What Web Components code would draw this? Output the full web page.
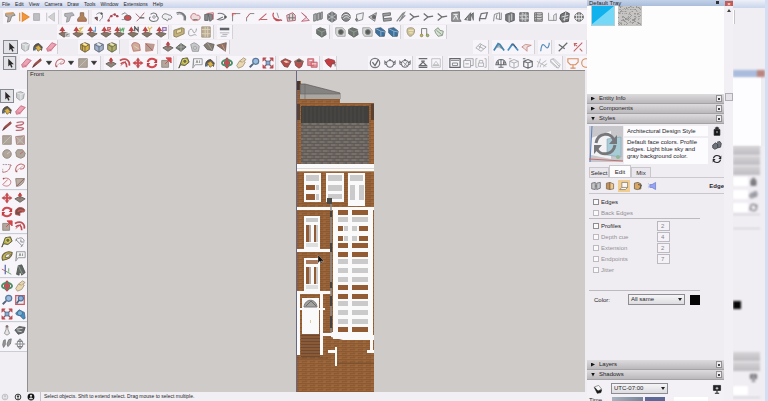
<!DOCTYPE html>
<html lang="en">
<head>
<meta charset="utf-8">
<title>Modeling workspace</title>
<style>
  html, body { margin: 0; height: 100%; overflow: hidden; }
  body { font: 6px/8px "Liberation Sans", "Open Sans", sans-serif; color: #26262a; background: #f0edf2; }
</style>
</head>
<body>
<model-workspace></model-workspace>
<script>
const ICONS = {
  pointer: '<path d="M5 2v9l2-2 1.5 3.5 1.5-.7-1.5-3.3h3z" fill="#111" stroke="none"/>',
  solid: '<path d="M3 3l5-1 4 2-1 6-4 2-4-3z" fill="#c6cacb" stroke="#8b9092"/><path d="M3 3l5 2v7M8 5l4-1" stroke="#eee"/>',
  bucket: '<path d="M2 11c-1-5 2-8 6-8l4 4-1 4-4-4z" fill="#463c38" stroke="#333"/><path d="M4 7l4-2 3 4-4 3z" fill="#d5a82c" stroke="#76602b"/><path d="M2 7l2 2v3z" fill="#377da8" stroke="none"/>',
  eraser: '<path d="M2 9l6-7 5 2-6 7-4 1z" fill="#eb9bab" stroke="#bd5369"/><path d="M2 9l5 1 6-6M7 10v2" stroke="#d66f85"/>',
  pencil: '<path d="M2 12l2-4 7-6 1 2-7 6z" fill="#923831" stroke="#7d2b27"/><path d="M2 12l3-3" stroke="#222"/>',
  squiggle: '<path d="M3 3c12-3 9 3 3 3s-4 3 2 3 3 4-6 3" stroke="#b55661" stroke-width="1.5"/>',
  rect: '<path d="M2 2h10v10H2z" fill="#a59a8d" stroke="#887c71"/><path d="M2 12L12 2" stroke="#c5bcb1"/>',
  rrect: '<path d="M2 3l10-1v10H3z" fill="#a99e94" stroke="#a4625b"/><path d="M2 3l10 9M12 2L3 12" stroke="#c6bcb1"/>',
  circle: '<circle cx="7" cy="7" r="5" fill="#a69b8e" stroke="#817469"/><path d="M7 7l4-3" stroke="#d1c6bb"/>',
  poly: '<path d="M4 2h6l3 4-1 4-4 2-5-2-1-5z" fill="#a69b8e" stroke="#817469"/><path d="M7 7l4-3" stroke="#b5524d"/>',
  arc: '<path d="M2 12c6 0 9-4 9-9" stroke="#b2464f"/><path d="M2 12V8M2 3h9l2 2" stroke="#8f7777" stroke-dasharray="2 1"/>',
  pie: '<path d="M2 11C1 4 8 0 12 4c1 3-2 5-5 4" stroke="#bd5054" stroke-width="1.2"/><path d="M2 11l9-7" stroke="#c9a5a5"/><circle cx="3" cy="11" r="1" fill="#a44" stroke="none"/>',
  loop: '<path d="M3 3c5-2 10 2 8 6s-7 3-9 1M2 10l6-6" stroke="#bb555d"/><circle cx="3" cy="3" r="1" fill="#a33" stroke="none"/>',
  fan: '<path d="M2 3h10c0 6-5 9-9 9z" fill="#b1a397" stroke="#806c60"/><path d="M3 12l9-9" stroke="#744"/>',
  move: '<path d="M7 1l2 3H8v2h2V5l3 2-3 2V8H8v2h1l-2 3-2-3h1V8H4v1L1 7l3-2v1h2V4H5z" fill="#cc2f33" stroke="#9f2429" stroke-width=".5"/>',
  push: '<path d="M1 8l6-3 6 3-6 4z" fill="#81776c" stroke="#504841"/><path d="M7 8V2M5 4l2-3 2 3z" fill="#cc2b2e" stroke="#b82428"/>',
  rotate: '<path d="M2 6c1-5 8-5 10-1M12 8c-1 5-8 5-10 1" stroke="#c8343a" stroke-width="2.4"/><path d="M13 2v5H9zM1 12V7h4z" fill="#b6262c" stroke="none"/>',
  follow: '<path d="M2 10C0 4 5 1 9 2s5 4 1 5-3 1-3 4z" fill="#653832" stroke="#a63431"/><path d="M5 7c0-3 5-3 7 0" stroke="#ba443c" stroke-width="2"/>',
  scale: '<path d="M2 4h8v8H2z" fill="#a99d90" stroke="#817469"/><path d="M6 8l5-5M7 1h6v6z" fill="#cf2e33" stroke="#cf2e33"/>',
  offset: '<path d="M1 4c8-4 12 1 11 6M2 8c5-4 7-1 7 4" stroke="#b9383d" stroke-width="2"/><path d="M8 5l-6 5" stroke="#b9383d"/>',
  tape: '<path d="M2 10l3-8 6-1 2 5-5 4-5-1-2 4z" fill="#aaa236" stroke="#36351c"/><circle cx="8" cy="5" r="2.5" fill="#5d592e" stroke="#eee55a"/>',
  dim: '<path d="M2 4l8 8M4 2L2 6M11 9l-3 4M5 3c4-2 6 0 7 3M8 4v3h4" stroke="#6c6f73"/>',
  protractor: '<path d="M2 12C-1 5 7 0 13 3 13 9 8 11 2 12z" fill="#b8ac37" stroke="#554c2d" stroke-width="1.3"/><path d="M5 9c0-4 3-5 6-4-1 3-3 4-6 4z" fill="#eee" stroke="#594c29"/>',
  label: '<path d="M3 2h10v7H5l-3 4zM3 2v8" fill="#f6f6f6" stroke="#7d8186"/><path d="M6 7l1-3 1 3M10 4v3" stroke="#777"/>',
  axes: '<path d="M5 1v11" stroke="#5360a8" stroke-width="1.6"/><path d="M5 8l7 4M9 5v4" stroke="#438a4d"/><path d="M5 8L1 6" stroke="#c13c42"/>',
  text3d: '<path d="M3 12l2-10 4-1 4 9-4 3-1-3H6v3z" fill="#4e5752" stroke="#343c38"/><path d="M5 2l5 10" stroke="#8a948f"/>',
  orbit: '<path d="M7 1c4 2 4 10 0 12-4-2-4-10 0-12z" fill="#c5393d" stroke="#902b32"/><path d="M1 7c1-5 11-5 12 0-1 4-11 4-12 0z" stroke="#308052" stroke-width="2"/><path d="M7 3v8" stroke="#bd3640" stroke-width="2"/>',
  hand: '<path d="M2 10l3-5 5-4 3 2-3 2 2 1-3 5-5 2z" fill="#e8d3a8" stroke="#9b8a68"/><path d="M5 5l4 1" stroke="#a58b61"/>',
  zoom: '<circle cx="9" cy="5" r="3.5" fill="#8fb4dc" stroke="#44678f" stroke-width="1.4"/><path d="M2 12l4-4" stroke="#39526d" stroke-width="2.2"/>',
  zoomwin: '<path d="M2 2h10v10H2z" fill="#e7ecf5" stroke="#c74147" stroke-width="1.4"/><circle cx="8" cy="5" r="3" fill="#7fa8d4" stroke="#375b87" stroke-width="1.3"/><path d="M3 11l3-4" stroke="#39526d" stroke-width="2"/>',
  extents: '<path d="M3 3l8 8M11 3l-8 8" stroke="#7c4650" stroke-width="1.6"/><path d="M1 1h4L1 5zM13 1v4L9 1zM13 13H9l4-4zM1 13V9l4 4z" fill="#bd3237" stroke="#a72d33" stroke-width=".6"/><circle cx="7" cy="7" r="2.4" fill="#789fca" stroke="#40638b"/>',
  prev: '<path d="M2 6l4-4 3 2 3 1 1 7-2 1-4-4-4-1z" fill="#2c83b6" stroke="#315a84"/><circle cx="7" cy="6" r="3" fill="#61a6ce" stroke="#2d5a83"/>',
  camera: '<path d="M6 2h2v4l2 5-3 2-3-2 2-5z" fill="#e5e2e1" stroke="#7e7e80"/><circle cx="7" cy="3" r="1.4" fill="#7d5757" stroke="none"/>',
  eye: '<path d="M1 7l5-4 7 1-2 6-6 2z" fill="#55585a" stroke="#343738"/><path d="M3 6l7-1M4 8l5 1" stroke="#ddd"/>',
  feet: '<path d="M3 3l2-1v6l-2 3-1-3zM9 2l3-1-1 6-3 3-1-3z" fill="#8c8d8e" stroke="#646567"/>',
  section: '<circle cx="7" cy="7" r="3.6" stroke="#6a6e73"/><path d="M7 1v12M1 7h12M7 1L4 4h6zM7 13l3-3H4z" stroke="#6a6e73" fill="none"/>',
  down: '<path d="M4 5h6l-3 4z" fill="#171717" stroke="#171717" stroke-width=".8"/>',
  sheet: '<path d="M2 3l9-1 2 3-4 1-2 6-3 1 1-6-3-1z" fill="#a9a4a0" stroke="#6f6d6b"/><path d="M2 3h9" stroke="#db8e38" stroke-width="2"/>',
  graysheet: '<path d="M2 3l9-1 2 3-4 1-2 6-3 1 1-6-3-1z" fill="#adadb0" stroke="#87878b"/>',
  play: '<path d="M5 2l8 5-8 5zM2 2v10" fill="#f18c20" stroke="#e27a15" stroke-width="1.3"/>',
  stop: '<path d="M3 3h7v8H3z" fill="#b8b7ba" stroke="#a4a3a7"/>',
  rewind: '<path d="M11 2v10L4 7zM2 2v10" fill="#ccc" stroke="#b4b4b6"/>',
  stamp: '<path d="M5 2h4v4l3 3v3H2V9l3-3z" fill="#a77342" stroke="#75533a"/><path d="M2 11h10" stroke="#c7513b"/>',
  node: '<path d="M4 4c4-4 8-1 7 3s-4 3-3 5" stroke="#62666a"/><path d="M2 8l3-1v4z" fill="#b53640" stroke="#333"/><circle cx="10" cy="3" r="1" fill="#333"/>',
  dots: '<path d="M1 12L4 6l4-2 5 2" stroke="#a44750"/><g fill="#a22d38" stroke="none"><circle cx="2" cy="11" r="1.4"/><circle cx="5" cy="6" r="1.4"/><circle cx="9" cy="4" r="1.4"/><circle cx="12" cy="6" r="1.4"/></g>',
  blob: '<path d="M2 4l4-2 3 3" stroke="#666"/><ellipse cx="9" cy="8" rx="4" ry="3" fill="#c73b3b" stroke="#5d4545"/><path d="M2 10h4" stroke="#777"/>',
  split: '<path d="M2 3l5 5 5-6M7 8l-4 4" stroke="#8f444a"/><path d="M7 8h5" stroke="#444" stroke-width="1.5"/>',
  cycle: '<path d="M3 4c4-4 8 0 7 2 4 2 1 6-2 6-6 1-8-4-5-5" stroke="#5b6063" stroke-width="1.2"/><circle cx="7" cy="7" r="1.5" stroke="#777"/>',
  cloud: '<path d="M2 5c3-4 6 0 9 0 4 3-1 6-2 4-1 4-3 2-3 1-5-1-5-3-4-5z" stroke="#55585c" fill="#efeff0"/>',
  redcloud: '<path d="M2 7c1-5 5-5 7-2 4-1 5 3 3 5-4 2-9 2-10-3z" stroke="#ba4f59" fill="#edd9d9"/><path d="M5 10h5" stroke="#555"/>',
  pipe: '<path d="M2 3c6-2 11 2 9 8" stroke="#66696c" stroke-width="3"/><path d="M2 3c6-1 9 3 8 8" stroke="#c2c3c4"/>',
  dbl: '<path d="M2 4h4v7H2zM6 3l5 1v6l-3 2z" fill="#777a7c" stroke="#484b4d"/><path d="M4 3l8-1v8" stroke="#bd4850"/>',
  curve: '<path d="M2 3c5-1 9 1 9 4s-5 4-9 3l6-3" stroke="#606366" stroke-width="1.2"/><circle cx="11" cy="7" r="1.2" fill="#333"/>',
  corner: '<path d="M3 12V3h9" stroke="#666"/><path d="M3 6V3h4" stroke="#c45151" stroke-width="1.6"/>',
  corner2: '<path d="M3 12V8l4-5h5" stroke="#68696c"/><path d="M3 8l4-5" stroke="#c45151"/>',
  angle: '<path d="M2 11L11 3M4 10h8" stroke="#b95157" stroke-width="1.2"/>',
  redpath: '<path d="M3 2c-3 7 4 8 10 9M3 8c3 4 6 4 9 2" stroke="#bd373f" stroke-width="1.4"/><path d="M7 2l2 6" stroke="#777"/>',
  redbox: '<path d="M2 5l7-3 3 3v6l-9 1z" stroke="#9e424d" fill="#e4d3d5"/><path d="M5 4v7M9 3v8M3 8h9" stroke="#555"/>',
  tri: '<path d="M3 2l9 9-9 1 6-5z" stroke="#b34d63" fill="#ecd3db"/>',
  boards: '<path d="M2 4l3-1v8l-3 1zM6 3l3-1v8l-3 1zM10 2l2-1v8l-2 1z" fill="#a3a5a5" stroke="#575a5b"/>',
  hex: '<path d="M7 1l5 3v6l-5 3-5-3V4z" fill="#666a6c" stroke="#4b4f51"/><path d="M2 4l10 6M12 4L2 10M7 1v12" stroke="#b3b5b6"/>',
  dome: '<circle cx="7" cy="7" r="5" fill="#777a7c" stroke="#444"/><path d="M2 7c3-4 7-4 10 0M4 9c2-3 5-3 7 0" stroke="#eee"/>',
  quad: '<path d="M3 4l8-2-1 8-7 2z" stroke="#65686b" fill="#efeff0"/><circle cx="3" cy="10" r="1.2" fill="#777"/>',
  cone: '<path d="M2 7l9-5-2 10z" stroke="#5a5d5e" fill="#c5c6c7"/><circle cx="8" cy="7" r="2" fill="#555"/>',
  stack: '<path d="M2 3l9-1v3l-8 1v3l9-1v3l-9 1z" fill="#939596" stroke="#4f5253"/>',
  blade: '<path d="M2 12l7-9 2-1-5 9M5 12l7-7" stroke="#777b7b" stroke-width="1.4"/>',
  fork: '<path d="M2 3l5 4 6-1M2 11l5-4" stroke="#5c5e60" stroke-width="1.5"/>',
  boxa: '<path d="M2 2l9-1v8l2 3H2z" fill="#8a8c8d" stroke="#55585a"/><path d="M4 4h5M4 10l3-5 2 5" stroke="#fff"/>',
  bars: '<path d="M2 10l7-8v9zM9 5l3-3v9" fill="#75797b" stroke="#454849"/><path d="M5 8v3" stroke="#eee"/>',
  para: '<path d="M5 3l7-1-2 7H3zM3 9v3" stroke="#606264" stroke-width="1.5"/>',
  frame: '<path d="M3 12l1-8 6-2v8M7 4l-1 5 6 1V2" stroke="#66696b"/>',
  book: '<path d="M2 4l6-2 4 1v8l-6 2-4-2z" fill="#686c6e" stroke="#3b3d3e"/><path d="M6 5v8M9 3v8" stroke="#ddd"/>',
  mesh: '<path d="M2 2h10v10H2z" fill="#737577" stroke="#4b4e50"/><path d="M2 5h10M2 9h10M5 2v10M9 2v10M2 5l7 7M5 2l7 7" stroke="#dedede" stroke-width=".8"/>',
  hatch: '<path d="M3 2h9v10H3z" fill="#c9c9ca" stroke="#555"/><path d="M3 5c3-2 5 1 9-1M3 8c3-2 5 1 9-1M3 11c3-2 5 1 9-1M5 2v10" stroke="#555"/>',
  ell: '<path d="M3 2v9h9V3l-3 2v6" stroke="#777a7c" fill="#eeeeef"/>',
  cube3d: '<path d="M2 4l6-3 4 2-1 9-7 1-3-4z" fill="#606365" stroke="#333"/><path d="M3 7l8-2M5 10l6-2M8 1l-2 11" stroke="#ddd"/>',
  globe: '<circle cx="7" cy="7" r="5" fill="#656869" stroke="#333"/><path d="M2 5h10M2 9h10M7 2v10M4 3v8M10 3v8" stroke="#eee"/>',
  plane: '<path d="M1 5l9-3 3 1v6l-9 4-3-1z" fill="#bca96b" stroke="#776c42"/><path d="M4 9V5l6-2v4z" fill="#eadb9d" stroke="#8a7b49"/>',
  wave: '<path d="M2 10c-1-7 4-8 5-4s4 1 4-3M2 10c3 4 6-2 9 1" stroke="#85888b"/>',
  tiles: '<path d="M2 1h10v12H2z" fill="#b2a184" stroke="#95866e"/><path d="M2 4h10M2 9h10M6 1v12M9 1v12" stroke="#ddd1b7"/>',
  list: '<path d="M1 2h11v3H1z" fill="#4a4f55" stroke="none"/><path d="M1 8h11M4 10h6M2 12h7" stroke="#9da2a7"/>',
  darkbox: '<path d="M2 4l4-2 6 2 1 6-5 3-6-4z" fill="#5d645f" stroke="#444b46"/><path d="M2 4l6 3 5-2M8 7v5" stroke="#8d968f"/>',
  photo: '<path d="M2 2h8l3 3v7H4L2 9z" fill="#d1d3d1" stroke="#929593"/><circle cx="8" cy="7" r="3" fill="#424744" stroke="#737673"/>',
  bluebox: '<path d="M2 3l6-1 5 4-1 6H6L2 8z" fill="#235e91" stroke="#334b61"/><path d="M2 3l6 3 5 1M8 6v6" stroke="#8ab0cf"/>',
  pot: '<path d="M3 3c3-2 7-1 8 1 1 5-3 8-5 8S1 7 3 3z" fill="#c7b989" stroke="#8e8767"/><path d="M4 5h6M5 8h4" stroke="#fff3c4"/>',
  plug: '<path d="M3 10V3h6v8" stroke="#565a50"/><circle cx="3" cy="11" r="1.5" fill="#d1ad2d" stroke="#7c7135"/><circle cx="10" cy="11" r="1.5" fill="#98b545" stroke="#6a793b"/>',
  leaf: '<path d="M2 5l4-3 2 3 4 1-1 5-5 1-3-4z" stroke="#63835f" fill="#d5dfd3"/><path d="M4 5l6 5" stroke="#63835f"/>',
  goldcube: '<path d="M2 4l5-2 5 2v6l-5 3-5-3z" fill="#d4a82a" stroke="#413a25"/><path d="M2 4l5 3 5-3M7 7v6M4 5v6" stroke="#5b502a"/><path d="M5 3l4 2" stroke="#fff1a3" stroke-width="2"/>',
  bluecube: '<path d="M2 4l5-2 5 2v6l-5 3-5-3z" fill="#98a9c4" stroke="#444c59"/><path d="M2 4l5 3 5-3M7 7v6" stroke="#4c5a71"/><path d="M5 3l4 2" stroke="#eee" stroke-width="2"/>',
  greencube: '<path d="M2 4l5-2 5 2v6l-5 3-5-3z" fill="#a8a45a" stroke="#464931"/><path d="M2 4l5 3 5-3M7 7v6" stroke="#53562e"/><path d="M5 3l4 2" stroke="#e8e4ad" stroke-width="2"/>',
  patch: '<path d="M2 5c1-5 7-3 9-1l1 7-8 1z" fill="#c9a58e" stroke="#b2605a"/><path d="M5 6l5 3" stroke="#ead3bd"/>',
  patch2: '<path d="M2 3l10 1-2 7-8 1z" fill="#ab9587" stroke="#c17266"/><path d="M2 3l8 8" stroke="#a03e3a"/>',
  gem: '<path d="M1 8l6-5 6 4-6 5z" fill="#62685f" stroke="#464b45"/><path d="M7 3v9M3 7h8" stroke="#a8ada5"/>',
  graycup: '<path d="M2 4l4-2 4 2 2 2-1 6H4z" fill="#c1c2c3" stroke="#85878b"/><circle cx="7" cy="8" r="2" stroke="#999"/>',
  tent: '<path d="M1 5l4-3 8 2-2 7-6-1z" fill="#766f66" stroke="#4b4742"/><path d="M5 2l6 9" stroke="#a99c8d"/>',
  redtent: '<path d="M1 5l11-3-1 10z" fill="#856051" stroke="#644940"/><path d="M7 4l4 8" stroke="#c59c7d"/>',
  redgem: '<path d="M1 5l5-3 7 3-4 7-4-1z" fill="#af3432" stroke="#67302e"/><path d="M4 5l3-1 4 2-4 1z" fill="#e6ceb6" stroke="none"/>',
  red2: '<path d="M2 5l5 2 5-2-2 6-3 2-4-3z" fill="#b53735" stroke="#653030"/><path d="M2 5l5-3 5 3-5 2z" fill="#443d36" stroke="#9c5b4c"/>',
  pink: '<path d="M2 2h7v8H2zM6 6h7v6H6z" fill="#dd8189" stroke="#be4c56"/><path d="M7 8h5M4 4h3" stroke="#fff"/>',
  ruby: '<path d="M1 4l4-2 7 2 1 3-4 1-1 4-4-3z" fill="#be2428" stroke="#891d24"/><path d="M8 8h5v3" stroke="#5c3a3c"/>',
  vray: '<circle cx="7" cy="7" r="5.5" stroke="#63676a" stroke-width="1.4"/><path d="M4 6l3 4 4-7" stroke="#555a5d" stroke-width="1.5"/>',
  teapot: '<path d="M1 5l2 2c0-4 8-4 8 0l2-2v3l-2 1c-1 4-7 4-8 0L1 8zM6 3h2" stroke="#595e61" stroke-width="1.2"/>',
  teapot2: '<path d="M1 5l2 2c0-4 8-4 8 0l2-2v3l-2 1c-1 4-7 4-8 0L1 8zM6 3h2" stroke="#595e61" stroke-width="1.2"/><path d="M5 6l5 5M9 6l-3 5" stroke="#777"/>',
  render: '<path d="M2 2h10M2 12h10M3 10l4-4 4 4z" stroke="#565b5e" stroke-width="1.5"/><path d="M5 5h4" stroke="#666" stroke-width="2"/>',
  render2: '<path d="M2 2h10v10H2zM4 9l3-4 3 4z" stroke="#b0b2b4"/><path d="M3 10h8" stroke="#aaa"/>',
  fb: '<path d="M1 2h12v10H1z" stroke="#50555a" stroke-width="1.4"/><path d="M2 4h10M4 7h6v3H4z" stroke="#666b6d"/>',
  copyb: '<path d="M2 4h8v8H2zM4 4V2h9v8h-3M4 8h4" stroke="#8a8e91"/>',
  lock: '<path d="M3 2H1v10h2M11 2h2v10h-2M4 7h6v4H4zM5 7V4h4v3" stroke="#a0a3a5"/>',
  globe2: '<path d="M1 9c1-8 11-8 12 0zM7 3v9M4 9l-1-3M10 9l1-3M4 12h6M4 5v4M10 5v4" stroke="#53585b" stroke-width="1.2"/>',
  proxy: '<path d="M2 5l5-2 5 2v6l-5 2-5-2zM2 5l5 2 5-2M7 7v6M1 2h3" stroke="#989c9f"/>',
  proxy2: '<path d="M2 5l5-2 5 2v6l-5 2-5-2zM2 5l5 2 5-2M7 7v6M1 2h3" stroke="#53585b" stroke-width="1.3"/>',
  fur: '<path d="M2 12c0-5 3-6 3-10M5 12c0-4 3-5 7-8M9 12c0-3 2-3 4-4M1 5l11 6" stroke="#a5a7a9"/>',
  clip: '<path d="M2 3l4-1 7 7-2 4-3-1-6-6zM4 2l8 9M2 5l8 7" stroke="#a5a7a9"/>',
  lamp: '<path d="M1 2h12v4l-3 3H4L1 6zM7 9v4M4 13h6" stroke="#d2814c" stroke-width="1.3"/>',
  bulb: '<circle cx="7" cy="7" r="5" stroke="#d2814c" stroke-width="1.3"/>',
  sketchy: '<path d="M1 8l5-5 3 2 4 2-6 5zM4 6l6 3M7 4L5 9" stroke="#93979b"/>',
  peak: '<path d="M1 11l5-8 2 1 5 7" stroke="#2675a8" stroke-width="2"/><path d="M4 8l3-3 3 4" fill="#b1cddd" stroke="#666"/>',
  peak2: '<path d="M1 11l5-7 2 1 5 6" stroke="#2d81bc" stroke-width="2"/><path d="M5 5l2-2 4 5" stroke="#353b40"/>',
  ribbon: '<path d="M1 7l4-3 7 1-5 2v5L4 9z" stroke="#bd7771" fill="#ecdcda"/>',
  spline: '<path d="M2 12c1-11 4-8 6-5s4-1 4-5" stroke="#427eb4" stroke-width="1.4"/>',
  slash: '<path d="M2 12L12 2M2 4l7 5" stroke="#54585b" stroke-width="1.4"/>',
  redslash: '<path d="M2 12L12 2M2 3l4 3M9 9l3 3M3 6V3h3" stroke="#bc5050" stroke-width="1.2"/>',
  wire: '<path d="M1 3l5-1v10l-5-1zM8 3l5-1v8l-5 2zM6 7h2" stroke="#55585b" fill="#c5c7c9"/>',
  face: '<path d="M2 3l5-1v10l-5-1z" fill="#c79155" stroke="#73604d"/><path d="M7 2l5 2v7l-5 1z" fill="#f0ca8a" stroke="#73604d"/>',
  edge: '<path d="M4 2h8v7H4zM4 9l-3 3h8l3-3" fill="#f8f7f2" stroke="#7c7467"/>',
  water: '<path d="M2 3l5-1 4 2v7l-5 1-4-1z" fill="#d8a661" stroke="#5b5045"/><path d="M7 5l5 1-3 5" stroke="#333"/>',
  modeling: '<path d="M4 5h3l5-3v10L7 9H4z" fill="#97a6ec" stroke="#687ad6"/><path d="M2 3v8M4 5v4" stroke="#9ba9e4" stroke-dasharray="1 1"/>',
  bag: '<path d="M3 5h8v8H3z" fill="#16181a" stroke="#16181a"/><path d="M4 3h6M7 1v4" stroke="#222" stroke-width="2"/><path d="M7 7v3" stroke="#fff"/>',
  dice: '<path d="M1 7l4-3 3 2v5l-4 2-3-2zM7 3l4-1 2 3-1 5-4 1" fill="#70747d" stroke="#30353c"/>',
  refresh: '<path d="M2 6c1-5 8-5 10-1M12 8c-1 5-8 5-10 1" stroke="#28292b" stroke-width="1.7"/><path d="M13 2v5H9zM1 12V7h4z" fill="#222" stroke="none"/>',
  shadow: '<path d="M2 4l6-2 4 5-5 3z" fill="#f8f8f8" stroke="#777"/><path d="M2 5l5 5 5-2-1 4-5 1z" fill="#111" stroke="#222"/>',
  pin: '<path d="M2 2h10v7H2z" fill="#202226" stroke="#202226"/><path d="M7 4v4M5 6h4" stroke="#fff"/><path d="M7 9v4M4 13h6" stroke="#222" stroke-width="1.5"/>',
  q: '<circle cx="7" cy="7" r="5" fill="#e5e5e8" stroke="#a0a0a5"/><path d="M7 4v3M7 9v1" stroke="#777"/>',
  info: '<circle cx="7" cy="7" r="5" fill="#f7f7f7" stroke="#26282a" stroke-width="1.6"/><path d="M7 3v8M5 6h4" stroke="#222" stroke-width="1.5"/>',
  user: '<circle cx="7" cy="7" r="6" fill="#151617" stroke="none"/><circle cx="7" cy="5" r="2" fill="#ddd" stroke="none"/><path d="M3 11c2-4 6-4 8 0" fill="#ddd" stroke="none"/>',
};
'XZJRWNYP'.split('').forEach((k, i) => {
  const c = ['#b9bdbd', '#d7b43a', '#4a8dc4', '#c74b4b', '#4fa35a', '#3f4042', '#d9b343', '#8b61a8'][i];
  const mark = ['M9 9h4v3H9z', 'M8 3l4-1-4 5h5', 'M11 1v5H8', 'M9 6V2h3v2l-3 1 4 2', 'M8 2l1 4 2-3 1 3 1-4', 'M9 6V1l4 5V1', 'M8 1l2 3 3-3M10 4v3', 'M9 7V2h4v3H9'][i];
  ICONS['sand' + i] = `<path d="M1 9l5-2 7 2-6 4z" fill="#776553" stroke="#574c42"/><path d="M5 8V3M3 5l2-3 2 3z" fill="#c83232" stroke="#b42d2d" stroke-width="1.5"/><path d="${mark}" stroke="${c}" stroke-width="1.4"/>`;
});

const define = (name, css, html, ready) => customElements.define(name, class extends HTMLElement {
  connectedCallback() {
    if (this.shadowRoot) return;
    const root = this.attachShadow({ mode: 'open' });
    const t = document.createElement('template');
    t.innerHTML = `<style>*{box-sizing:border-box}button,input,select{font:inherit;color:inherit;margin:0;padding:0}${css}</style>` +
      (typeof html === 'function' ? html(this) : html);
    root.append(t.content.cloneNode(true));
    if (ready) ready(this, root);
  }
});

define('line-icon', ':host{display:block;width:12px;height:12px;flex:none}svg{display:block;width:100%;height:100%}',
  el => `<svg viewBox="0 0 14 14" fill="none" stroke="#555" aria-hidden="true">${ICONS[el.getAttribute('name')] || ''}</svg>`);

define('tool-group', `
  :host{display:flex;flex:none;align-items:center;height:14px;border-right:1px solid #d4d1d7;background:#f7f5f9}
  :host([plain]){border-color:transparent}
  :host([columns]){display:grid;grid-template-columns:1fr 1fr;height:auto;grid-auto-rows:14px;border-right:0;border-bottom:1px solid #c9cdd6}
  button{flex:1 1 0;min-width:0;height:14px;display:flex;align-items:center;justify-content:center;border:0;background:none}
  line-icon{opacity:.88}
  button.on{border:1px solid #858a91;background:#e3e3e7}`,
  el => el.getAttribute('icons').split(' ').map(n => {
    const on = n.startsWith('*'); if (on) n = n.slice(1);
    return `<button type="button" aria-label="${n}"${on ? ' class="on"' : ''}><line-icon name="${n}"></line-icon></button>`;
  }).join(''),
  el => { if (el.hasAttribute('width')) el.style.width = el.getAttribute('width') + 'px'; });

define('tool-row', ':host{display:flex;align-items:center;gap:3px;padding-left:3px;overflow:hidden;min-width:0}', '<slot></slot>');

define('menu-bar', `
  :host{display:flex;gap:5px;padding-left:2px;height:8px;background:linear-gradient(#eeeef6,#c8d4ec);overflow:hidden}
  button{border:0;background:none;white-space:nowrap;line-height:8px}`,
  el => el.getAttribute('items').split(',').map(t => `<button type="button">${t}</button>`).join(''));

define('tool-palette', ':host{display:flex;flex-direction:column;gap:1px;padding-top:19px;background:#f2eff4;border-right:1px solid #918e90}', `
  <tool-group columns icons="*pointer solid bucket eraser"></tool-group>
  <tool-group columns icons="pencil squiggle rect rrect circle poly arc pie loop fan"></tool-group>
  <tool-group columns icons="move push rotate follow scale offset"></tool-group>
  <tool-group columns icons="tape dim protractor label axes text3d"></tool-group>
  <tool-group columns icons="orbit hand zoom zoomwin extents prev"></tool-group>
  <tool-group columns icons="camera eye feet section"></tool-group>`);

const B = (x, y, w, h, f) => `<rect x="${x}" y="${y}" width="${w}" height="${h}" fill="${f}"/>`;
const BR = 'url(#brick)', W = '#fbfafa', G = '#cbcaca', BW = '#935b33';
function building() {
  let s = '';
  s += B(297, 81, 4, 22, BR) + B(297, 81, 3, 9, '#493629');
  s += '<path d="M300 84h5l35 9v6h-40z" fill="#858381" stroke="#5c5958" stroke-width=".7"/><path d="M300 94h40v5h-40z" fill="#aaa6a2"/><path d="M300 94h40M305 84v15" stroke="#6a6664" stroke-width=".6"/>';
  s += B(297, 99, 43, 5, BR) + B(297, 103, 77, 62, BR) + B(301, 106, 68, 17, '#41403e') + B(297, 104, 3, 16, '#5b412f') + B(371, 104, 3, 16, '#5b412f');
  s += '<path d="' + Array.from({ length: 16 }, (_, i) => `M${303 + i * 4} 107v16`).join('') + '" stroke="#4d4a47"/>';
  s += B(301, 123, 68, 42, 'url(#slate)') + B(297, 164, 77, 228, BR) + B(297, 164, 77, 7, W) + B(297, 168, 77, 1, '#ddd9d5') + B(297, 171, 77, 1, '#b4936c');
  [[304, 17], [326, 18], [348, 17]].forEach(([x, w], i) => {
    s += B(x, 173, w, i > 1 ? 33 : 29, W) + B(x + 2, 175, w - 4, 6, G);
    if (i === 0) s += B(306, 185, 9, 5, BW) + B(316, 185, 3, 5, G) + B(306, 194, 9, 6, BW) + B(316, 194, 3, 6, G);
    if (i === 1) s += B(328, 185, 14, 6, G) + B(328, 194, 14, 5, G);
    if (i === 2) s += B(350, 185, 5, 15, G) + B(359, 185, 5, 15, G);
  });
  s += B(297, 207, 77, 3, W);
  [210, 252].forEach((y, i) => {
    s += B(304, y + 6, 16, 33, W) + B(306, y + 8, 12, 4, i ? '#a7795f' : G) + B(306, y + 15, 5, 17, BW) + B(314, y + 15, 2, 17, BW) + B(316, y + 15, 2, 17, G) + B(309, y + 15, 2, 17, '#b4aaa3') + B(306, y + 33, 12, 4, '#dededf');
    s += B(297, y + 39, 34, 3, W);
  });
  s += B(333, 207, 40, 132, W) + '<path d="M331 332h6l5 3h32v5h-31l-12-3z" fill="#fbfafa"/>';
  const rows = [[210, 'b'], [217, 'g'], [226, 'm'], [236, 'm'], [243, 'b'], [252, 'b'], [259, 'g'], [268, 'g'], [277, 'g'], [285, 'b'], [294, 'b'], [301, 'g'], [310, 'g'], [319, 'g'], [327, 'b']];
  rows.forEach(([y, k]) => {
    s += B(338, y, 10, 5, k === 'g' ? G : BW) + B(352, y, 16, 5, k === 'g' ? G : BW);
    if (k === 'm') s += B(343, y, 5, 5, G) + B(352, y, 5, 5, G) + B(343, y, 1, 5, W) + B(357, y, 2, 5, W);
  });
  s += '<path d="M331 204v132" stroke="#8e8b88" stroke-width="1.5"/><path d="M331 211v6m0 26v9m0 30v6m0 8v10m0 10v12" stroke="#454240" stroke-width="2"/>' + B(327, 198, 5, 6, '#4b4a47');
  s += B(302, 298, 17, 36, W) + '<path d="M304 307c1-9 12-9 13 0z" fill="#a4a29e" stroke="#777"/><path d="M306 306l5-5 5 5" stroke="#6e6a66" fill="none"/>' + B(297, 308, 28, 2, W) + B(310, 320, 1, 3, '#d7cf9b');
  s += B(301, 334, 19, 22, '#8a5a38') + '<path d="' + Array.from({ length: 8 }, (_, i) => `M301 ${335.5 + i * 3}h19`).join('') + '" stroke="#6d4a32"/>';
  s += B(297, 294, 3, 61, W) + B(320, 294, 3, 61, W) + B(323, 333, 9, 3, W) + B(335, 347, 2, 19, W) + B(328, 350, 8, 3, W) + B(370, 340, 3, 12, W) + B(367, 350, 7, 3, W);
  s += '<path d="M337 363h37M297 358h31" stroke="#654226" opacity=".6"/><path d="M296.500 70v322" stroke="#686884"/>';
  s += '<path d="M318 255v8l2-2 1 3 1-1-1-2h3z" fill="#111" stroke="#ddd" stroke-width=".3"/>';
  return s;
}
define('model-view', `
  :host{display:block;position:relative;min-width:0;min-height:0;overflow:hidden;background:#cfcbc9;border-top:1px solid #8c898b}
  svg{display:block;width:100%;height:100%}
  span{position:absolute;left:2px;top:0;line-height:7px}`,
  () => `<svg viewBox="28 71 557 321" preserveAspectRatio="xMidYMax meet" role="img" aria-label="Front elevation of a brick town house"><defs>
  <pattern id="brick" width="8" height="4" patternUnits="userSpaceOnUse"><path d="M0 0h8v4H0z" fill="#996439"/><path d="M0 1.500h8M0 3.500h8M2 0v1.500M6 2v1.500" stroke="#87562f" stroke-width=".7"/><path d="M3 2h3" stroke="#a76e42"/></pattern>
  <pattern id="slate" width="8" height="6" patternUnits="userSpaceOnUse"><path d="M0 0h8v6H0z" fill="#6f6863"/><path d="M0 2.500h8M0 5.500h8M2 0v3M6 3v3" stroke="#5e5854" stroke-width=".9"/><path d="M3 1h4M0 4h4" stroke="#7f7873"/></pattern></defs>${building()}</svg><span>Front</span>`);

define('status-bar', `
  :host{display:flex;align-items:center;gap:5px;height:9px;padding-left:1px;overflow:hidden;background:#f1eff3;white-space:nowrap}
  line-icon{width:8px;height:8px}p{margin:0;padding-left:3px;border-left:1px solid #c5c3c8;line-height:9px}`,
  '<line-icon name="q"></line-icon><line-icon name="info"></line-icon><line-icon name="user"></line-icon><p><slot></slot></p>');

define('tray-heading', `
  :host{display:flex;align-items:center;height:10px;padding:0 2px 0 4px;gap:4px;background:linear-gradient(#dddbdd,#bab8bb);border-bottom:1px solid #a5a3a6;line-height:9px}
  i{width:4px;height:4px;background:#151515;clip-path:polygon(0 0,100% 50%,0 100%)}
  :host([open]) i{clip-path:polygon(0 0,100% 0,50% 100%)}
  b{flex:1;font-weight:400}
  button{width:6px;height:7px;border:1px solid #929095;background:#eee;display:grid;place-items:center}
  button::after{content:"";width:2px;height:2px;background:#444}`,
  '<i></i><b><slot></slot></b><button type="button" aria-label="Close panel"></button>');

define('edge-option', `
  :host{display:flex;align-items:center;height:11px}
  :host([off]){color:#929096}
  label{display:flex;align-items:center;gap:2px;width:64px}
  input[type=checkbox]{appearance:none;width:6px;height:6px;border:1px solid #8e8d92;background:#fafafa}
  :host([off]) input{border-color:#bcbac0}
  input[type=text]{width:13px;height:10px;border:1px solid #b9b7be;background:#f4f2f6;padding-left:3px;color:#85838a;border-radius:0}`,
  el => `<label><input type="checkbox"><slot></slot></label>${el.hasAttribute('value') ? `<input type="text" aria-label="Value" value="${el.getAttribute('value')}">` : ''}`);

define('drop-down', `
  :host{display:block;width:57px;position:relative}
  select{appearance:none;display:block;width:100%;height:11px;border:1px solid #8d8c91;background:linear-gradient(#f5f4f6,#dddce0);padding-left:2px;border-radius:0;line-height:9px}
  i{position:absolute;right:3px;top:4px;border:2px solid transparent;border-top:3px solid #222;border-bottom:0;pointer-events:none}`,
  el => `<select aria-label="${el.getAttribute('label')}"><option>${el.getAttribute('value')}</option></select><i></i>`);

define('style-preview', ':host{display:block;width:34px;height:36px}svg{display:block;width:100%;height:100%}', `
  <svg viewBox="0 0 34 36"><path d="M0 0h34v36H0z" fill="#c8c8cc"/><path d="M2 12l20-7v28L2 29z" fill="#f2f2f5"/><path d="M18 13l14-2v20l-14-2z" fill="#a8cbd8" stroke="#83a4b0" stroke-width=".6"/><path d="M3 0L1 36" stroke="#587fc1"/><path d="M0 33l34 2" stroke="#c56d69"/><circle cx="29" cy="31" r="2" fill="#8eb796"/>
  <path d="M7 17C9 6 22 6 25 14M26 19c-2 11-15 11-18 4" fill="none" stroke="#76777a" stroke-width="3"/><path d="M28 9v9h-8zM5 28v-9h8z" fill="#76777a"/></svg>`);

define('style-editor', `
  :host{display:flex;flex-direction:column;flex:1;min-height:0;padding:2px 0 0 2px;background:#f0edf2}
  .top{display:grid;grid-template-columns:34px 1fr 15px;gap:1px;height:38px}
  .desc{display:flex;flex-direction:column;gap:2px}
  .desc input{width:100%;height:10px;border:0;background:#fcfbfd;padding-left:3px}
  .desc p{margin:0;flex:1;padding:1px 0 1px 3px;background:#fcfbfd;line-height:7px}
  .side{display:flex;flex-direction:column;align-items:center;justify-content:space-between}
  line-icon{width:10px;height:10px}
  .tabs{display:flex;align-items:end;height:13px;margin-top:1px;border-bottom:1px solid #cbc8ce}
  .tabs button{height:10px;width:20px;border:1px solid #c9c6cc;border-bottom:0;background:#eae7ec}
  .tabs .on{height:12px;width:22px;background:#fdfcfd}
  .kinds{display:flex;align-items:center;gap:2px;height:16px;padding-left:1px;border-bottom:1px solid #c9c6cc}
  .kinds button{width:12px;height:12px;border:0;background:none;display:grid;place-items:center}
  .kinds .on{background:#f2cd91}
  .kinds b{margin-left:auto}
  .opts{padding:2px 0 0 4px;margin-right:24px;border-bottom:1px solid #bcb9bf}
  .opts + .opts{padding-top:1px;padding-bottom:15px}
  .color{display:flex;align-items:center;padding:3px 0 0 5px}
  .color span{flex:0 0 34px}
  .color button{width:10px;height:10px;border:0;background:#050505;margin-left:5px}`, `
  <div class="top"><style-preview></style-preview>
    <div class="desc"><input aria-label="Style name" value="Architectural Design Style"><p>Default face colors. Profile edges. Light blue sky and gray background color.</p></div>
    <div class="side"><line-icon name="bag"></line-icon><line-icon name="dice"></line-icon><line-icon name="refresh"></line-icon></div></div>
  <div class="tabs"><button type="button">Select</button><button type="button" class="on">Edit</button><button type="button">Mix</button></div>
  <div class="kinds"><button type="button" aria-label="Wire"><line-icon name="wire"></line-icon></button><button type="button" aria-label="Face"><line-icon name="face"></line-icon></button><button type="button" class="on" aria-label="Edge settings"><line-icon name="edge"></line-icon></button><button type="button" aria-label="Watermark"><line-icon name="water"></line-icon></button><button type="button" aria-label="Modeling"><line-icon name="modeling"></line-icon></button><b>Edge</b></div>
  <div class="opts"><edge-option>Edges</edge-option><edge-option off>Back Edges</edge-option></div>
  <div class="opts"><edge-option value="2">Profiles</edge-option><edge-option off value="4">Depth cue</edge-option><edge-option off value="2">Extension</edge-option><edge-option off value="7">Endpoints</edge-option><edge-option off>Jitter</edge-option></div>
  <div class="color"><span>Color:</span><drop-down label="Edge color" value="All same"></drop-down><button type="button" aria-label="Pick color"></button></div>`);

define('default-tray', `
  :host{display:grid;grid-template-rows:6px 1fr;min-height:0;overflow:hidden;background:#f3f1f5}
  header{display:flex;align-items:end;gap:3px;background:linear-gradient(#c2d1e8,#a9bdda);overflow:hidden;padding-left:2px}
  header b{flex:1;font-weight:400;line-height:6px}
  header button{width:8px;height:5px;border:0;background:#c45c55;color:#fff;line-height:4px}
  header i{width:3px;height:3px;background:#333;margin:0 3px 2px 0}
  .body{display:grid;grid-template-columns:1fr 9px;min-height:0}
  .main{display:flex;flex-direction:column;min-width:0;min-height:0}
  .mats{flex:0 0 88px;display:flex;gap:3px;padding:0 4px;background:#fefdfe}
  .mats svg{width:24px;height:20px}
  .bar{display:flex;flex-direction:column;align-items:center;background:#f2f0f4}
  .bar::before{content:"";border:2px solid transparent;border-bottom:3px solid #444;border-top:0;margin:3px 0 81px}
  .bar button{width:8px;height:8px;border:1px solid #b0aeb4;background:#e5e3e8}
  .shadow{display:flex;flex:none;align-items:center;height:17px;padding:0 2px 0 6px}
  .shadow drop-down{margin-left:8px}.shadow line-icon:last-child{margin-left:auto}
  .shadow line-icon{width:10px;height:10px}
  .time{display:flex;align-items:start;height:4px;flex:none;overflow:hidden;padding-left:2px}
  .time span{flex:0 0 23px;line-height:6px}
  .time input{width:53px;height:8px;appearance:none;background:linear-gradient(90deg,#a8b3bd,#77869b 58%,#eef 59%,#eef 62%,#5c6895 63%)}
  .time input::-webkit-slider-thumb{appearance:none;width:1px;height:1px;background:transparent}
  .time em{width:34px;height:6px;margin-left:9px;background:#fff}`, `
  <header><b>Default Tray</b><i></i><button type="button" aria-label="Close tray">×</button></header>
  <div class="body"><div class="main">
    <div class="mats"><svg viewBox="0 0 24 20"><path d="M0 0h24v20H0z" fill="#76d8f7"/><path d="M0 0h23L0 19z" fill="#10b2ed"/><path d="M.5 0v19.500h23V0" fill="none" stroke="#b6cfd6"/></svg>
    <svg id="n" viewBox="0 0 24 20"><path d="M0 0h24v20H0z" fill="#c6c5c4"/></svg></div>
    <tray-heading>Entity Info</tray-heading><tray-heading>Components</tray-heading><tray-heading open>Styles</tray-heading>
    <style-editor></style-editor>
    <tray-heading>Layers</tray-heading><tray-heading open>Shadows</tray-heading>
    <div class="shadow"><line-icon name="shadow"></line-icon><drop-down label="Time zone" value="UTC-07:00"></drop-down><line-icon name="pin"></line-icon></div>
    <div class="time"><span>Time</span><input type="range" aria-label="Time"><em></em></div>
  </div><div class="bar"><button type="button" aria-label="Scroll"></button></div></div>`,
  (el, root) => {
    let d = '', r = 7;
    for (let i = 0; i < 150; i++) {
      r = (r * 73 + 41) % 1009; const x = r % 23; r = (r * 73 + 41) % 1009;
      d += `M${x} ${r % 19}l${(i % 3) - 1} 1`;
    }
    root.querySelector('#n').insertAdjacentHTML('beforeend', `<path d="${d}" stroke="#888684" stroke-width=".7"/>`);
  });

define('back-window', `
  :host{display:flex;flex-direction:column;overflow:hidden;background:#f0edf3;border-right:3px solid #d3e0f3}
  .cap{height:8px;background:linear-gradient(#eef0f7,#cad6ec)}
  .gap{height:62px;display:flex}.gap i{width:2px;height:14px;border-right:1px solid #c5c3c8;background:#fff;margin-top:2px}
  .title{height:7px;background:linear-gradient(90deg,#a9bcdc 75%,#b9857f 76%);filter:blur(1px)}
  .white{flex:0 0 69px;background:#fdfcfe;border-right:4px solid #eeebf1}
  .soft{display:flex;flex-direction:column;flex:1;min-height:0;filter:blur(1px)}
  .bars{display:grid;grid-auto-rows:9px;gap:1px;margin-right:5px}.bars i{background:linear-gradient(#d6d4d7,#bdbbbf)}
  .row{display:flex;justify-content:space-between;align-items:center;height:13px;padding-right:7px}
  .row i{width:15px;height:9px;background:#fff}.row line-icon{width:9px;height:9px;opacity:.6}
  .fill{flex:1}.low{flex:0 0 43px}
  .rule{border-top:1px solid #ccc9cf;height:14px;margin-right:5px}
  .rule:last-child{height:4px}
  .swatch{width:8px;height:8px;background:#060606}`, `
  <div class="cap"></div><div class="gap"><i></i></div><div class="title"></div><div class="white"></div>
  <div class="soft"><div class="bars"><i></i><i></i><i></i></div>
  <div class="row"><i></i><line-icon name="bag"></line-icon></div><div class="row"><i></i><line-icon name="dice"></line-icon></div><div class="row"><i></i><line-icon name="refresh"></line-icon></div>
  <div class="rule"></div><div class="rule"></div><div class="fill"></div><div class="swatch"></div><div class="low"></div>
  <div class="bars"><i></i><i></i></div><div class="row"><span></span><line-icon name="pin"></line-icon></div><div class="row"><i></i></div><div class="rule"></div></div>`);

define('model-workspace', `
  :host{display:grid;grid-template-columns:minmax(0,1fr) 146px 35px;height:100vh}
  .app{display:grid;grid-template-rows:8px 17px 14px 16px 15px minmax(0,1fr) 9px;min-width:0;background:#f0edf2}
  .work{display:grid;grid-template-columns:28px minmax(0,1fr);min-height:0;padding-right:2px}
  .end{margin-left:auto}
  .r2{padding-left:57px}.mid{margin-left:76px}.v{margin-left:28px}.w{margin-left:2px}.c{margin-left:17px}.p{margin-left:6px}
  menu-bar,status-bar{font-size:5px}`, `
  <div class="app">
    <menu-bar items="File,Edit,View,Camera,Draw,Tools,Window,Extensions,Help"></menu-bar>
    <tool-row><tool-group width="56" icons="sheet play stop rewind"></tool-group><tool-group width="27" icons="graysheet stamp"></tool-group>
      <tool-group plain width="495" icons="node dots blob split cycle cloud pipe redcloud dbl curve corner corner2 angle redpath redbox tri boards hex dome quad cone stack blade fork fork fork boxa bars para frame book mesh hatch ell cube3d globe"></tool-group></tool-row>
    <tool-row class="r2"><tool-group width="112" icons="sand0 sand1 sand2 sand3 sand4 sand5 sand6 sand7"></tool-group><tool-group width="42" icons="plane wave tiles"></tool-group><tool-group width="16" icons="list"></tool-group>
      <tool-group class="mid" width="18" icons="darkbox"></tool-group><tool-group width="68" icons="photo darkbox photo bluebox bluebox"></tool-group><tool-group width="43" icons="pot plug leaf"></tool-group></tool-row>
    <tool-row><tool-group width="55" icons="*pointer solid bucket eraser"></tool-group><tool-group class="c" width="42" icons="goldcube bluecube greencube"></tool-group>
      <tool-group class="p" width="29" icons="patch patch2"></tool-group><tool-group width="69" icons="push gem graycup tent redtent"></tool-group>
      <tool-group class="end" width="16" icons="sketchy"></tool-group><tool-group width="43" icons="peak peak2 ribbon"></tool-group><tool-group width="14" icons="spline"></tool-group><tool-group width="32" icons="slash redslash"></tool-group></tool-row>
    <tool-row><tool-group width="14" icons="*pointer"></tool-group><tool-group width="81" icons="eraser pencil down pie down rect down"></tool-group><tool-group width="70" icons="push offset move rotate scale"></tool-group>
      <tool-group width="40" icons="tape label bucket"></tool-group><tool-group width="56" icons="orbit hand zoom extents"></tool-group><tool-group width="41" icons="redgem red2 pink"></tool-group><tool-group width="14" icons="ruby"></tool-group>
      <tool-group class="v" width="45" icons="vray teapot teapot2"></tool-group><tool-group width="27" icons="render render2"></tool-group><tool-group class="w" width="41" icons="fb copyb lock"></tool-group><tool-group class="w" width="69" icons="globe2 proxy proxy2 fur clip"></tool-group><tool-group plain width="28" icons="lamp bulb"></tool-group></tool-row>
    <div class="work"><tool-palette></tool-palette><model-view></model-view></div>
    <status-bar>Select objects. Shift to extend select. Drag mouse to select multiple.</status-bar>
  </div>
  <default-tray></default-tray><back-window></back-window>`);
</script>
</body>
</html>
